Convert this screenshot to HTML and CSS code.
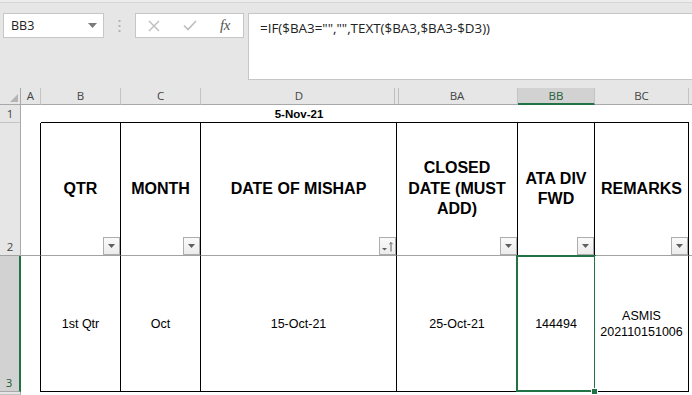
FILE: index.html
```html
<!DOCTYPE html>
<html>
<head>
<meta charset="utf-8">
<link rel="stylesheet" href="styles.css">
</head>
<body>
<div class="app">
  <div class="edge"></div>
  <div class="fbar">
    <div class="namebox">
      <span class="nb-text">BB3</span>
      <svg class="caret" width="9" height="5" viewBox="0 0 9 5"><path d="M0 0H9L4.5 5Z" fill="#7a7a7a"/></svg>
    </div>
    <div class="grip">
      <svg width="3" height="12" viewBox="0 0 3 12"><rect x="0.5" y="0" width="2" height="2" fill="#b3b3b3"/><rect x="0.5" y="5" width="2" height="2" fill="#b3b3b3"/><rect x="0.5" y="10" width="2" height="2" fill="#b3b3b3"/></svg>
    </div>
    <div class="fxbox">
      <svg class="ic-x" width="12" height="12" viewBox="0 0 12 12"><path d="M1 1L11 11M11 1L1 11" stroke="#bdbdbd" stroke-width="1.4" fill="none"/></svg>
      <svg class="ic-ok" width="14" height="11" viewBox="0 0 14 11"><path d="M1 5.5L5 9.5L13 1" stroke="#bdbdbd" stroke-width="1.6" fill="none"/></svg>
      <span class="fx">fx</span>
    </div>
    <div class="formula">=IF($BA3="","",TEXT($BA3,$BA3-$D3))</div>
  </div>

  <div class="sheet">
    <!-- column headers -->
    <div class="corner"><svg width="8" height="8" viewBox="0 0 8 8"><path d="M8 0V8H0Z" fill="#b4b4b4"/></svg></div>
    <div class="ch">A</div>
    <div class="ch">B</div>
    <div class="ch">C</div>
    <div class="ch ch-d">D</div>
    <div class="ch ch-ba">BA</div>
    <div class="ch ch-sel">BB</div>
    <div class="ch">BC</div>
    <div class="ch ch-end"></div>

    <!-- row 1 -->
    <div class="rh">1</div>
    <div class="c"></div>
    <div class="c top"></div>
    <div class="c top"></div>
    <div class="c top title">5-Nov-21</div>
    <div class="c top"></div>
    <div class="c top"></div>
    <div class="c top"></div>
    <div class="c"></div>

    <!-- row 2 -->
    <div class="rh frz">2</div>
    <div class="c frz lb"></div>
    <div class="t hd frz">QTR<span class="fbtn"><svg width="7" height="4" viewBox="0 0 7 4"><path d="M0 0H7L3.5 4Z" fill="#5f5f5f"/></svg></span></div>
    <div class="t hd frz">MONTH<span class="fbtn"><svg width="7" height="4" viewBox="0 0 7 4"><path d="M0 0H7L3.5 4Z" fill="#5f5f5f"/></svg></span></div>
    <div class="t hd frz">DATE OF MISHAP<span class="fbtn"><svg width="13" height="11" viewBox="0 0 13 11"><path d="M1 7H6L3.5 9.5Z" fill="#5f5f5f"/><path d="M10 10.5V1.5M8.3 3.2L10 1.5L11.7 3.2" stroke="#5f5f5f" stroke-width="1" fill="none"/></svg></span></div>
    <div class="t hd frz">CLOSED<br>DATE (MUST<br>ADD)<span class="fbtn"><svg width="7" height="4" viewBox="0 0 7 4"><path d="M0 0H7L3.5 4Z" fill="#5f5f5f"/></svg></span></div>
    <div class="t hd frz">ATA DIV<br>FWD<span class="fbtn"><svg width="7" height="4" viewBox="0 0 7 4"><path d="M0 0H7L3.5 4Z" fill="#5f5f5f"/></svg></span></div>
    <div class="t hd frz">REMARKS<span class="fbtn"><svg width="7" height="4" viewBox="0 0 7 4"><path d="M0 0H7L3.5 4Z" fill="#5f5f5f"/></svg></span></div>
    <div class="c frz"></div>

    <!-- row 3 -->
    <div class="rh rh-sel">3</div>
    <div class="c lb"></div>
    <div class="t bot val">1st Qtr</div>
    <div class="t bot val">Oct</div>
    <div class="t bot val">15-Oct-21</div>
    <div class="t bot val">25-Oct-21</div>
    <div class="t bot val active">144494</div>
    <div class="t bot val">ASMIS<br>202110151006</div>
    <div class="c"></div>

    <!-- row 4 (partially visible) -->
    <div class="rh"></div>
    <div class="c rest"></div>
  </div>
</div>
</body>
</html>
```

FILE: styles.css
```css
* { box-sizing: border-box; }

html, body {
  margin: 0;
  padding: 0;
  width: 692px;
  height: 395px;
  overflow: hidden;
}

.app {
  display: flex;
  flex-direction: column;
  width: 692px;
  height: 395px;
  background: #e6e6e6;
  font-family: "Liberation Sans", Arial, sans-serif;
}

.edge {
  height: 3px;
  flex: none;
  background: #ededed;
  border-bottom: 1px solid #d6d6d6;
}

.fbar {
  flex: none;
  height: 85px;
  display: flex;
  align-items: flex-start;
  padding: 10px 0 0 3px;
}

.namebox {
  width: 101px;
  height: 25px;
  background: #fff;
  border: 1px solid #c6c6c6;
  display: flex;
  align-items: center;
  justify-content: space-between;
  padding: 0 6px 0 7px;
}

.nb-text {
  font-family: "Open Sans", "Noto Sans", sans-serif;
  font-size: 12.5px;
  color: #222;
}

.caret { display: block; }

.grip {
  width: 31px;
  height: 25px;
  display: flex;
  align-items: center;
  justify-content: center;
}
.grip svg { display: block; }

.fxbox {
  width: 109px;
  height: 25px;
  background: #fff;
  border: 1px solid #c6c6c6;
  display: flex;
  align-items: center;
  padding-left: 12px;
}
.ic-x { display: block; }
.ic-ok { display: block; margin-left: 23px; }
.fx {
  margin-left: 23px;
  font-family: "Liberation Serif", "DejaVu Serif", serif;
  font-style: italic;
  font-size: 15px;
  color: #555;
  letter-spacing: -0.5px;
}

.formula {
  margin-left: 4px;
  flex: 1;
  height: 67px;
  background: #fff;
  border: 1px solid #c6c6c6;
  border-right: none;
  padding: 5px 0 0 11px;
  font-family: "Open Sans", "Noto Sans", sans-serif;
  font-size: 13.4px;
  line-height: 18px;
  color: #222;
}

.sheet {
  flex: 1;
  display: grid;
  grid-template-columns: 21px 20px 80px 80px 196px 121px 77px 94px 1fr;
  grid-template-rows: 17px 18px 133px 136px 1fr;
  background: #fff;
}

.corner {
  background: #e6e6e6;
  border-right: 1px solid #a8a8a8;
  border-bottom: 1px solid #a8a8a8;
  display: flex;
  align-items: flex-end;
  justify-content: flex-end;
  padding: 0 2px 2px 0;
}
.corner svg { display: block; }

.ch {
  background: #e6e6e6;
  border-right: 1px solid #c4c4c4;
  border-bottom: 1px solid #a8a8a8;
  font-family: "Open Sans", "Noto Sans", sans-serif;
  font-size: 11.5px;
  color: #444;
  display: flex;
  align-items: center;
  justify-content: center;
  line-height: 1;
}
.ch-d {
  border-right: none;
  background: linear-gradient(to left, #e6e6e6 0 2px, #bdbdbd 2px 3px, #e6e6e6 3px);
}
.ch-ba {
  background: linear-gradient(to right, #e6e6e6 0 1px, #bdbdbd 1px 2px, #e6e6e6 2px);
}
.ch-sel {
  background: #d2d2d2;
  color: #1d5c38;
  border-bottom: 2px solid #217346;
  padding-top: 1px;
}
.ch-end { border-right: none; }

.rh {
  background: #e6e6e6;
  border-right: 1px solid #a8a8a8;
  border-bottom: 1px solid #c4c4c4;
  font-family: "Open Sans", "Noto Sans", sans-serif;
  font-size: 11.5px;
  color: #444;
  display: flex;
  align-items: flex-end;
  justify-content: center;
  padding-bottom: 1px;
  line-height: 14px;
}
.rh-sel {
  background: #d2d2d2;
  color: #1d5c38;
  border-right: 2px solid #217346;
  border-bottom: 1px solid #a8a8a8;
  padding-right: 1px;
}

.c { background: #fff; }
.top { border-bottom: 1px solid #000; }
.lb { border-right: 1px solid #000; }
.frz { border-bottom: 1px solid #a3a3a3; }

.title {
  display: flex;
  align-items: center;
  justify-content: center;
  font-weight: bold;
  font-size: 11.5px;
  color: #000;
}

.t {
  position: relative;
  background: #fff;
  border-right: 1px solid #000;
  display: flex;
  align-items: center;
  justify-content: center;
  text-align: center;
  color: #000;
}
.bot { border-bottom: 1px solid #000; }

.hd {
  font-weight: bold;
  font-size: 16px;
  line-height: 20.5px;
}

.val {
  font-size: 12.5px;
  line-height: 16px;
}

.fbtn {
  position: absolute;
  right: 0;
  bottom: 0;
  width: 17px;
  height: 18px;
  border: 1px solid #adadad;
  background: linear-gradient(#fafafa, #ececec);
  display: flex;
  align-items: center;
  justify-content: center;
}
.fbtn svg { display: block; }

.active::after {
  content: "";
  position: absolute;
  left: -2px;
  top: -1px;
  right: -2px;
  bottom: -1px;
  border: 2px solid #217346;
  pointer-events: none;
}
.active::before {
  content: "";
  position: absolute;
  right: -3px;
  bottom: -3px;
  width: 5px;
  height: 5px;
  background: #217346;
  box-shadow: 0 0 0 1px #fff;
  z-index: 2;
}

.rest { grid-column: 2 / -1; }
```
